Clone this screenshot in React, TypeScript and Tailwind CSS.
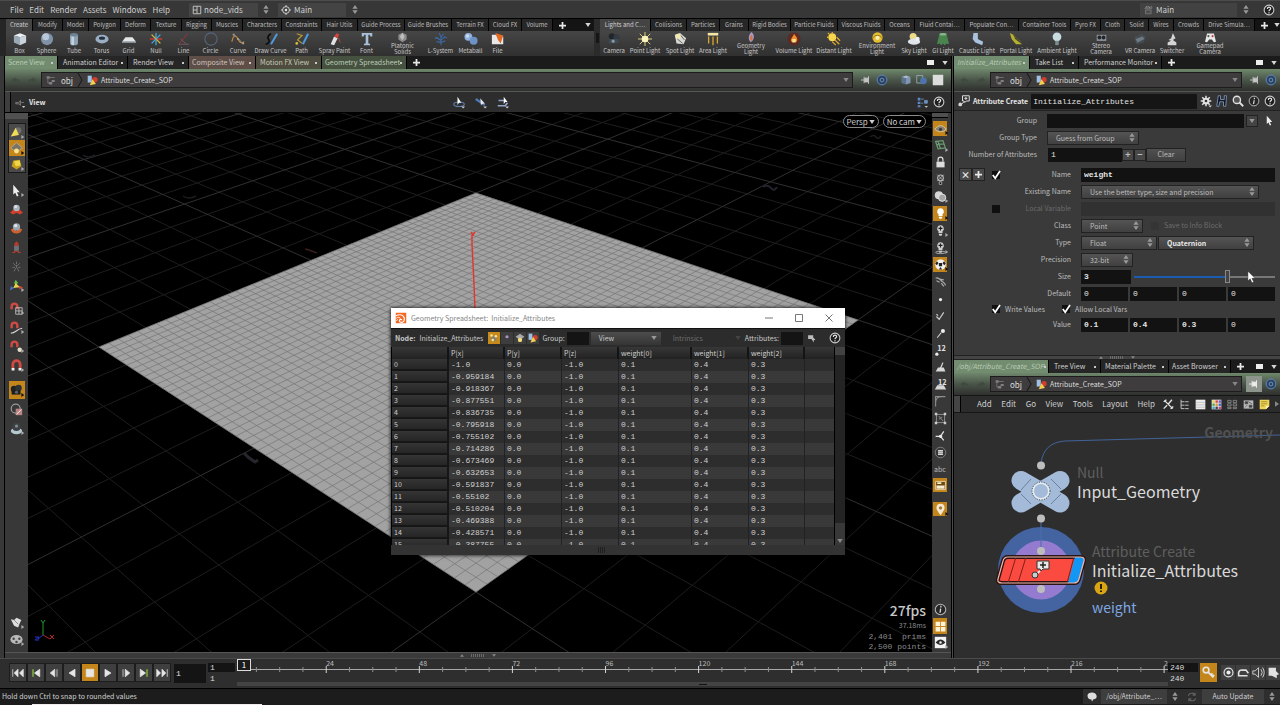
import React from 'react';
import { clsx } from 'clsx';

const MONO = "font-['Liberation_Mono',monospace]";

/* ---------- icons, all on a 16x16 box ---------- */

const magnet = <path d="M3.500 12V6.500a4.500 4.500 0 0 1 9 0V12" fill="none" stroke="#cf4a42" strokeWidth="3.500" />;
const smallMagnet = <path d="M2 9V5.500a3.500 3.500 0 0 1 7 0V9" fill="none" stroke="#cf4a42" strokeWidth="3" />;
const bulb = <path d="M8 1.500a4 4 0 0 0-2.500 7.200V11h5V8.700A4 4 0 0 0 8 1.500zM6 12h4v1.500L9 14.500H7l-1-1z" fill="currentColor" />;
const cube = (
  <>
    <path d="M1 4l7-2.500 7 2.500-7 2z" fill="#eef1f4" />
    <path d="M1 4l7 2v9l-7-3z" fill="#9ba9b6" />
    <path d="M15 4L8 6v9l7-3z" fill="#c9d3dc" />
  </>
);

const ICONS: Record<string, React.ReactNode> = {
  box: cube,
  sphere: <><circle cx="8" cy="8" r="7" fill="#7f92a8" /><circle cx="6.500" cy="5.500" r="4" fill="#b9c8d8" /></>,
  tube: <><path d="M3.500 3v10c0 3 9 3 9 0V3z" fill="#8fa3b5" /><path d="M5 4h3v11H5z" fill="#c3d2df" /><ellipse cx="8" cy="3" rx="4.500" ry="2" fill="#6e8496" /></>,
  torus: <><ellipse cx="8" cy="8" rx="7.500" ry="5" fill="#9aafc4" /><ellipse cx="8" cy="7" rx="3.500" ry="1.800" fill="#22303f" /></>,
  grid: <><path d="M4 6h8l4 5H0z" fill="#e4e7ea" /><path d="M0 11h16v1.500H0z" fill="#8b949c" /></>,
  null: <><path d="M8 1v14" stroke="#32a9c9" strokeWidth="1.600" /><path d="M1 8h14" stroke="#d03c2f" strokeWidth="1.600" /><path d="M3 3l10 10" stroke="#e0b23a" strokeWidth="1.600" /><path d="M13 3L3 13" stroke="#4e9fd8" strokeWidth="1.600" /></>,
  line: <><path d="M2 14L12 2" stroke="#a8323a" strokeWidth="1" /><path d="M2 14h12M4 8l7 6" stroke="#7d5a60" strokeWidth="1" /></>,
  circle: <circle cx="8" cy="8" r="7" fill="none" stroke="#56657d" strokeWidth="1.200" />,
  curve: <><path d="M1 11c2-9 5-7 7-3s4 6 7 3" fill="none" stroke="#c98d41" strokeWidth="1.300" /><path d="M3 3l3 2M9 8l5 6" stroke="#7f8ea3" /><path d="M2 2h2v2H2zM7 7h2v2H7zM13 12h2v2h-2z" fill="#b3a58c" /></>,
  drawcurve: <><path d="M2 14c4-1 5-4 3-6s1-5 3-6" fill="none" stroke="#0b0b0b" strokeWidth="1.800" /><path d="M15 2L8 14" stroke="#4f9be0" strokeWidth="2.200" /></>,
  path: <><path d="M2 2l6 2-5 5 5 4" fill="none" stroke="#b99a30" strokeWidth="1.400" /><path d="M15 2L9 14" stroke="#4f9be0" strokeWidth="2.200" /><circle cx="2" cy="13" r="1.500" fill="#d8c13f" /></>,
  spray: <><path d="M3 14l4-9 4 2-4 8z" fill="#dfe3e6" /><path d="M7 5l4 2 2-4-3-2z" fill="#d0443a" /><path d="M12 7l2 5" stroke="#d0443a" /></>,
  font: <path d="M2 1h12v4h-2L11 3H9.500v10l2 .5V15h-7v-1.500l2-.5V3H5L4 5H2z" fill="#a9bfd6" />,
  platonic: <><path d="M8 1l6 3v7l-6 4-6-4V4z" fill="#8c8c8c" /><path d="M8 1l3 6-3 5-4-5z" fill="#bdbdbd" /></>,
  lsystem: <path d="M8 15V5M8 10L3 6M8 9l5-4M8 6L6 1M8 6l3-4M4 7L1 7M12 6l3 1M8 12l-5-1M8 12l5-2" fill="none" stroke="#3c6aa8" strokeWidth="1.200" />,
  metaball: <><circle cx="5" cy="5.500" r="4.500" fill="#90b2dd" /><circle cx="11" cy="10" r="4.500" fill="#6d93c6" /><circle cx="4" cy="4.500" r="2" fill="#c8daf1" /></>,
  file: <><path d="M1 3h5l1 2h7v9H1z" fill="#e8e8e8" /><path d="M5 1l9 3-3 9-3-4z" fill="#e36a25" /></>,
  camera: <><circle cx="5.500" cy="5" r="3.500" fill="#20262a" /><circle cx="11" cy="6" r="3.500" fill="#323b43" /><path d="M2 8h11v5H2z" fill="#3f4951" /><circle cx="7" cy="10.500" r="1.800" fill="#8a99a3" /></>,
  pointlight: <><path d="M8 0v16M0 8h16M2 2l12 12M14 2L2 14" stroke="#e3d27c" strokeWidth="1.100" /><circle cx="8" cy="8" r="3.800" fill="#fbf3bd" /></>,
  spotlight: <><path d="M2 3l6-2 7 6-3 7-8-1z" fill="#d8d8d4" /><circle cx="6" cy="5" r="3" fill="#f2e9b2" /><path d="M5 8l6 5M9 4l4 5" stroke="#555" /></>,
  arealight: <><path d="M2 1h12v3H2z" fill="#f2e7a5" /><path d="M3 5v8M8 5v10M13 5v8" stroke="#d8a82c" strokeWidth="1.500" /></>,
  geolight: <><path d="M8 0c3 3 5 6 2 12l-3 3C2 10 4 4 8 0z" fill="#a79ac4" /><path d="M8 4c2 4 2 6 0 9-3-3-2-6 0-9z" fill="#e06c36" /></>,
  volumelight: <><circle cx="8" cy="8" r="7.500" fill="#5c2a22" /><path d="M8 2c3 4 5 6 3 9H5C3 8 7 6 8 2z" fill="#f08a2b" /><path d="M6 8h4v4H6z" fill="#fbe08b" /></>,
  distantlight: <><circle cx="6" cy="6" r="4.500" fill="#f5d64e" /><path d="M6 0v2M0 6h2M1 1l2 2M9 9l5 5M11 6l4 4M6 11l4 4" stroke="#e0ac2c" strokeWidth="1.500" /></>,
  envlight: <><circle cx="8" cy="8" r="7.500" fill="#e4bd31" /><path d="M1 10a7 5 0 0 1 14 0" fill="none" stroke="#876a10" strokeWidth="1.300" /><circle cx="8" cy="8.500" r="3" fill="#f7efb8" /></>,
  skylight: <><circle cx="7" cy="5" r="4" fill="#eddc8a" /><ellipse cx="8" cy="11" rx="7" ry="3.500" fill="#dfe4ea" /><circle cx="12" cy="8" r="2.500" fill="#eef1f4" /></>,
  gilight: <><path d="M4 2h8l3 12-3-1-2 2-2-2-2 2-2-2-3 1z" fill="#4a8550" /><ellipse cx="8" cy="2.500" rx="4" ry="1.500" fill="#86b98a" /></>,
  causticlight: <path d="M4 1h5v7l6 3-1 4-8-3-3-4z" fill="#a8c2df" />,
  portallight: <><path d="M1 1l4 2 2 5 8 6H8L3 8z" fill="#b5b02f" /><path d="M5 3l3 4 6 4" stroke="#6a6818" fill="none" /></>,
  ambientlight: <><circle cx="8" cy="5.500" r="5" fill="#c8dcdf" /><path d="M6 10h4v5H6z" fill="#7a8e92" /></>,
  stereo: <><path d="M1 4h14v9H1z" fill="#8b8f97" /><circle cx="5" cy="8" r="2.800" fill="#23262b" /><circle cx="11" cy="8" r="2.800" fill="#23262b" /></>,
  vrcamera: <><path d="M1 6l9-4 5 4-3 6-8 2z" fill="#454d53" /><path d="M3 8l8-3 2 3-8 4z" fill="#6f7b84" /></>,
  switcher: <path d="M9 1l3 6-3 2 4 3v3H3v-3l4-2-3-1 3-2z" fill="#d4d4d4" />,
  gamepad: <><path d="M3 2h10l3 12-3 1-3-4H6l-3 4-3-1z" fill="#e8e8e8" /><circle cx="5" cy="6" r="1.500" fill="#555" /><circle cx="11" cy="6" r="1.500" fill="#b44" /></>,

  // left tool column
  objects: <><circle cx="10" cy="5.500" r="4" fill="#6e6e6e" /><path d="M1 13L7 2l4 9z" fill="#f2dc56" /></>,
  points: <><path d="M8 1l7 6-7 6-7-6z" fill="#7b7466" stroke="#b9ae94" /><circle cx="8" cy="11" r="3" fill="#fbe28f" /></>,
  yellowcube: <><path d="M4 3l8-1 2 8-6 4-6-4z" fill="#c9a31c" /><path d="M5 4l7-1 1 6-6 1z" fill="#f0d74a" /></>,
  arrow: <path d="M4 1l8 9H8.500l2 4.500-2 .8-2-4.500L4 13z" fill="#ececec" />,
  move: <><path d="M0 12l4-4 4 2 4-2 4 4-4 2-4-2-4 2z" fill="#d2402c" /><circle cx="8" cy="6" r="4" fill="#aab3bd" /><circle cx="7" cy="4.500" r="1.800" fill="#dfe5ea" /></>,
  rotate: <><path d="M1 9c1 7 13 7 14 0l-3-1-4 3-4-3z" fill="#d2602c" /><circle cx="8" cy="6" r="4.500" fill="#9aa5b1" /><circle cx="7" cy="4.500" r="2" fill="#dfe5ea" /></>,
  scale: <><path d="M8 0l3 4-2 8 5 2-3 1-3-2-3 2-3-1 5-2-2-8z" fill="#b23a2e" /><path d="M5 6h6v6H5z" fill="#6b7178" /></>,
  pose: <path d="M8 2v3M8 6v4M4 4l3 3M12 4L9 7M5 14l2-4M11 14l-2-4M3 9h3M10 9h3" stroke="#707070" strokeWidth="1.200" />,
  handles: <><path d="M7 1l3 4-3 2-2-2z" fill="#62c04a" /><path d="M10 8l6 2-4 3z" fill="#d8432f" /><path d="M0 14l1-5 4 2z" fill="#4277d6" /><path d="M4 11l3-6 5 5z" fill="#e8d44c" /></>,
  snapgrid: <>{smallMagnet}<path d="M7 7h8v8H7zM11 7v8M7 11h8" fill="none" stroke="#c8c8c8" /></>,
  snapcurve: <>{smallMagnet}<path d="M1 15c6 0 7-5 14-6" fill="none" stroke="#d8d8d8" strokeWidth="1.300" /></>,
  snappoint: <>{smallMagnet}<circle cx="12" cy="12" r="2.800" fill="#e3ddc8" /></>,
  magnet: <>{magnet}<path d="M2 11h3.500v3H2zM10.500 11H14v3h-3.500z" fill="#eee" /></>,
  viewtool: <><circle cx="5" cy="6" r="4" fill="#202326" /><circle cx="10.500" cy="5" r="4" fill="#2e3235" /><path d="M2 8h11v5H2z" fill="#1b1d1f" /><circle cx="8" cy="10" r="2" fill="#5a6065" /></>,
  render: <><circle cx="7" cy="7" r="5.500" fill="none" stroke="#9a9a9a" strokeWidth="1.500" /><path d="M7 7h8v8H7z" fill="#b98484" /><path d="M8 14l6-6" stroke="#fff" /></>,
  flip: <><ellipse cx="8" cy="11" rx="7" ry="4" fill="#b5c9ce" /><circle cx="8" cy="6" r="5" fill="#3c4144" /><circle cx="8" cy="5" r="2" fill="#85898c" /></>,
  cloth: <><path d="M1 4l4 1 3-3 6 3-2 4-2 5-5-2z" fill="#dcdcdc" /><path d="M5 5l5 5" stroke="#777" /></>,
  reel: <><ellipse cx="8" cy="8" rx="7.500" ry="5.500" fill="#b9b9b9" /><circle cx="4.500" cy="7" r="1.500" fill="#444" /><circle cx="11.500" cy="7" r="1.500" fill="#444" /><circle cx="8" cy="11" r="1.500" fill="#444" /></>,

  // display option column
  eye: <><path d="M1 9c4-6 10-6 14 0-4 4-10 4-14 0z" fill="#8a8474" stroke="#ddd0a8" /><circle cx="8" cy="9" r="2" fill="#3b3b3b" /></>,
  refplane: <path d="M2 3l9-1 3 9-9 1zM5 3l3 9M3 7l9-1" fill="none" stroke="#6b9a6f" strokeWidth="1.500" />,
  lock: <><path d="M5 7V4.500a3 3 0 0 1 6 0V7" fill="none" stroke="#ddd" strokeWidth="1.500" /><path d="M3 7h10v7H3z" fill="#ddd" /></>,
  bulboff: <><circle cx="8" cy="6" r="3.500" fill="none" stroke="#bbb" strokeWidth="1.300" /><path d="M4 2l8 8M12 2L4 10M6.500 11h3v3h-3z" stroke="#bbb" /></>,
  spheres: <><circle cx="6" cy="6.500" r="5" fill="#d5d5d5" /><circle cx="10" cy="9.500" r="4.500" fill="#a5a5a5" stroke="#eee" /></>,
  bulb: <g color="#fff">{bulb}</g>,
  bulbplus: <g color="#cfcfcf">{bulb}<path d="M8 3v5M5.500 5.500h5" stroke="#222" strokeWidth="1.500" /></g>,
  bulbshadow: <g color="#cfcfcf">{bulb}<path d="M8 3v5M5.500 5.500h5" stroke="#222" strokeWidth="1.500" /><ellipse cx="8" cy="14" rx="6" ry="1.500" fill="none" stroke="#bbb" /></g>,
  ball: <><circle cx="8" cy="8" r="6.500" fill="#f2f2f2" /><path d="M6 6h4v4H6zM1.500 7l2-3 2 2-2 3zM14.500 7l-2-3-2 2 2 3zM6 14l2-3 2 3z" fill="#222" /></>,
  strands: <path d="M2 4c4-2 5 2 8 4s4 2 4 5M3 7l4 2M7 5l5 1M9 10l3 4" fill="none" stroke="#a9a9a9" strokeWidth="1.500" />,
  dot: <circle cx="8" cy="8" r="2" fill="#eee" />,
  normals: <path d="M3 8l4 4M6 12l6-9M3 5l2 2" stroke="#ccc" strokeWidth="1.500" />,
  trail: <><path d="M4 13l5-6" stroke="#ccc" strokeWidth="1.300" /><circle cx="11" cy="5" r="2.500" fill="#eee" /></>,
  pointnum: <><circle cx="3.500" cy="12.500" r="2" fill="#eee" /><text x="4" y="8" fontSize="9" fontWeight="700" fill="#e2e2e2">12</text></>,
  primnormal: <><path d="M2 13l3-5h7l2 5z" fill="#d6d6d6" /><path d="M8 9l3-7" stroke="#ddd" strokeWidth="1.500" /></>,
  primnum: <><path d="M1 14l3-5h8l3 5z" fill="#d6d6d6" /><text x="5" y="9" fontSize="9" fontWeight="700" fill="#e2e2e2">12</text></>,
  hull: <path d="M2 14V2h12M2 9c0-4 3-7 7-7" fill="none" stroke="#8f8f8f" strokeWidth="1.300" />,
  cage: <><path d="M3 3h10v10H3zM6 9l4-3M6 5l5 6" fill="none" stroke="#9c9c9c" /><path d="M1 1h3v3H1zM12 1h3v3h-3zM1 12h3v3H1zM12 12h3v3h-3z" fill="#ccc" /></>,
  tangents: <><path d="M2 9h6M8 9l4-6M8 9l4 5" stroke="#e3e3e3" strokeWidth="1.500" /><circle cx="8" cy="9" r="2" fill="#eee" /></>,
  film: <><circle cx="8" cy="8" r="6.500" fill="none" stroke="#8c8c8c" /><path d="M5 5h6v6H5z" fill="#e3e3e3" /><path d="M5 7h6M5 9h6" stroke="#777" /></>,
  images: <><path d="M2 3h12v10H2z" fill="#6b4a12" stroke="#f3dfb8" /><path d="M3 8h10v4H3zM4 4h5v2H4z" fill="#f7ecd0" /></>,
  pin: <><path d="M8 1a5 5 0 0 0-5 5c0 3 5 9 5 9s5-6 5-9a5 5 0 0 0-5-5z" fill="#f2e8d4" /><circle cx="8" cy="6" r="2" fill="#a37a30" /></>,
  quad: <path d="M2 2h5.500v5.500H2zM8.500 2H14v5.500H8.500zM2 8.500h5.500V14H2zM8.500 8.500H14V14H8.500z" fill="#fdf3d8" />,
  eyebox: <><path d="M1 1h14v14H1z" fill="#f2f2f2" /><path d="M2 8c4-5 8-5 12 0-4 4-8 4-12 0z" fill="#2a2a2a" /><circle cx="8" cy="8" r="1.500" fill="#eee" /></>,

  // small interface glyphs
  layout: <path d="M2 2h12v12H2zM8 2v12M2 8h6" fill="none" stroke="#c5c5c5" strokeWidth="1.500" />,
  radial: <><circle cx="8" cy="8" r="5.500" fill="none" stroke="#d2d2d2" strokeWidth="1.500" /><circle cx="8" cy="8" r="2" fill="#e2e2e2" /><path d="M8 0v3M8 13v3M0 8h3M13 8h3" stroke="#d2d2d2" strokeWidth="1.500" /></>,
  clapper: <><path d="M3 5l4-3 4 2 3-2v4H3zM4 8h9v6H4z" fill="#4d4d4d" stroke="#8a8a8a" /><path d="M5 2l2 3M9 2l2 3" stroke="#aaa" /></>,
  net: <><path d="M1 2h5v4H1zM9 8h5v3H9zM5 11h5v4H5z" fill="#808080" /><path d="M3 6v7h3M6 4h8" stroke="#8f8f8f" fill="none" /></>,
  shapes: <><path d="M1 1h6v10H1z" fill="#9fc0e4" /><circle cx="11.500" cy="7" r="4" fill="#cf3f2e" /><path d="M4 15l4-9 5 7z" fill="#f4d04f" /></>,
  back: <path d="M1 8l6-5v3c5 0 7 2 7 7-2-3-4-3-7-3v3z" fill="currentColor" />,
  forward: <path d="M15 8L9 3v3c-5 0-7 2-7 7 2-3 4-3 7-3v3z" fill="currentColor" />,
  pushpin: <path d="M0 8h5M5 3v10M6 5h5v6H6zM12 2v12" stroke="currentColor" fill="currentColor" strokeWidth="1.500" />,
  target: <><circle cx="8" cy="8" r="6.500" fill="#2c4260" stroke="#5d88bd" strokeWidth="1.300" /><circle cx="8" cy="8" r="2.500" fill="none" stroke="#7fa5d3" /></>,
  bluecube: <><path d="M2 4l6-2 6 2-6 2z" fill="#a9b9cd" /><path d="M2 4l6 2v8l-6-2z" fill="#5d7491" /><path d="M14 4L8 6v8l6-2z" fill="#8096b3" /></>,
  ghost: <><path d="M1 2h8v10H1z" fill="none" stroke="#8fa0b3" strokeWidth="1.300" /><circle cx="10" cy="9" r="4.500" fill="#4e74ad" /></>,
  square: <path d="M1 1h14v14H1z" fill="#dcdcdc" />,
  viewcam: <><path d="M1 8h4l3-3v7L5 10H1zM9 8h4" stroke="#777" fill="#4c4c4c" strokeWidth="1.300" /><path d="M10 13h5l-2.500 3z" fill="#ccc" /></>,
  select1: <><ellipse cx="8" cy="11" rx="7" ry="3" fill="none" stroke="#5f7fae" strokeWidth="1.500" /><path d="M6 1l5 8H8l-2 3z" fill="#fff" /><path d="M11 14h5l-2.500 2.500z" fill="#ccc" /></>,
  select2: <><path d="M1 4l12 8" stroke="#4f79b5" strokeWidth="3" /><path d="M7 3l6 7-4 .5L8 13z" fill="#e8e8e8" /><path d="M11 14h5l-2.500 2.500z" fill="#ccc" /></>,
  select3: <><path d="M1 13h10l3-4M2 6h8" stroke="#8fa8ca" strokeWidth="2.200" fill="none" /><path d="M9 1l5 7h-3l-2 3z" fill="#fff" /><path d="M11 14h5l-2.500 2.500z" fill="#ccc" /></>,
  options: <><path d="M1 1h4v4H1zM1 7h4v3H1zM1 12h4v3H1z" fill="#5c87c6" /><path d="M6 3h4M6 9h3M11 5h4v4h-4z" stroke="#83a4d2" fill="#5c87c6" /><path d="M11 13h5l-2.500 2.500z" fill="#ccc" /></>,
  help: <><circle cx="8" cy="8" r="6.500" fill="#1f1f1f" stroke="#cfcfcf" strokeWidth="1.400" /><path d="M5.800 6.500c0-3 4.400-3 4.400-.3 0 1.600-2.200 1.500-2.200 3.300M8 11v1.600" fill="none" stroke="#e5e5e5" strokeWidth="1.600" /></>,
  info: <><circle cx="8" cy="8" r="6.500" fill="#262626" stroke="#b5b5b5" strokeWidth="1.300" /><path d="M8.500 3.500v2M8.200 7l-.8 5" stroke="#ddd" strokeWidth="1.600" /></>,
  node: <><path d="M6 1h9v7h-4l-2 2-1-2H6z" fill="none" stroke="#e0e0e0" strokeWidth="1.300" /><path d="M10.500 2.500v4M8.500 4.500h4M8 9l-4 4" stroke="#e0e0e0" strokeWidth="1.300" /><circle cx="3" cy="12.500" r="2.500" fill="#d6d6d6" /></>,
  gear: <><path d="M8 1v14M1 8h14M3 3l10 10M13 3L3 13" stroke="#e2e2e2" strokeWidth="2" /><circle cx="8" cy="8" r="4.500" fill="#e2e2e2" /><circle cx="8" cy="8" r="1.800" fill="#333" /><path d="M11 14h5l-2.500 2.500z" fill="#ccc" /></>,
  hlogo: <path d="M3 1h3v5h5V1h3l-1 14h-3V9H5l-1 6H1z" fill="#0e1626" stroke="#8fa8cc" />,
  search: <><circle cx="6.500" cy="6.500" r="4.800" fill="#555" stroke="#e2e2e2" strokeWidth="1.800" /><path d="M10 10l5 5" stroke="#e2e2e2" strokeWidth="2.400" /></>,
  tools: <path d="M2 2l12 12M13 1L8 7M6 9l-5 5M1 4l4-3M11 14l4-3" stroke="#e2e2e2" strokeWidth="2" />,
  tree: <path d="M3 1v13M3 4h5M3 9h5M3 14h5M9 4h5M9 9h5M9 14h5" stroke="#c5c5c5" strokeWidth="1.400" fill="none" />,
  list: <><path d="M1 1h14v14H1z" fill="#ececec" /><path d="M1 5h14M1 8.500h14M1 12h14" stroke="#b3b3b3" /></>,
  palette: <><path d="M1 1h14v14H1z" fill="#eee" /><path d="M2 2h3.500v3.500H2z" fill="#ddd04b" /><path d="M6.500 2H10v3.500H6.500z" fill="#d14a3f" /><path d="M11 2h3.500v3.500H11z" fill="#7a5bc0" /><path d="M2 6.500h3.500V10H2z" fill="#51a650" /><path d="M6.500 6.500H10V10H6.500z" fill="#e5902f" /><path d="M11 6.500h3.500V10H11z" fill="#3b6cc4" /><path d="M2 11h3.500v3.500H2z" fill="#3da6c2" /><path d="M6.500 11H10v3.500H6.500z" fill="#444" /><path d="M11 11h3.500v3.500H11z" fill="#c3448c" /></>,
  table: <path d="M1 2h5v3H1zM1 7h5v3H1zM1 12h5v2H1zM9 2h5v3H9zM9 7h5v3H9zM9 12h5v2H9z" fill="none" stroke="#9d9d9d" />,
  map: <><path d="M1 2h14v12H1z" fill="#b9b9b9" /><path d="M3 4h4v3H3zM9 9h4v3H9zM8 4l5 3M3 12l3-3" fill="#444" stroke="#444" /></>,
  note: <><path d="M1 1h14v9l-5 5H1z" fill="#efd55a" /><path d="M3 4h9M3 7h9M3 10h5" stroke="#8a7420" /><path d="M10 15v-5h5z" fill="#fff3b0" /></>,
  key: <><circle cx="5" cy="5" r="3.500" fill="none" stroke="#e6e6e6" strokeWidth="2" /><path d="M7.500 7.500L14 14M11 11l2-2M13 13l2-2" stroke="#e6e6e6" strokeWidth="2.200" /></>,
  realtime: <><circle cx="8" cy="8" r="5.500" fill="#444" stroke="#e2e2e2" strokeWidth="1.500" /><circle cx="8" cy="8" r="2.500" fill="#eee" /></>,
  loop: <path d="M2 11V8a4 4 0 0 1 4-3h5l3 4M1 12h12" fill="none" stroke="#e0e0e0" strokeWidth="2" />,
  audio: <path d="M1 6h3l4-4v12l-4-4H1zM11 4q3 4 0 8M13 2q4 6 0 12" fill="none" stroke="#ccc" strokeWidth="1.200" />,
  playopt: <path d="M2 2h9v4l4 4-3 1v4L6 12H2z" fill="#e2e2e2" />,
  brain: <path d="M2 6c0-5 11-6 12 0 1 4-2 5-4 5l-2 3-1-3C4 12 2 9 2 6z" fill="#dedede" />,
  refresh: <path d="M2 6a6 6 0 0 1 11-1M14 10a6 6 0 0 1-11 1M13 1v4H9M3 15v-4h4" fill="none" stroke="#616161" strokeWidth="1.700" />,
  houdini: <><path d="M1 1h14v14H1z" fill="#f26722" /><path d="M1 5c9-4 13 2 11 7-2 3-7 2-6-1 1-2 3-1 3 0" fill="none" stroke="#fff" strokeWidth="1.500" /><path d="M1 9c3-3 6-2 6 0M2 12c0-1 1-2 2-2" fill="none" stroke="#fff" strokeWidth="1.200" /></>,
  particles: <><path d="M3 5h9v8H3z" fill="#8b8367" /><circle cx="4" cy="4" r="2" fill="#f7e7a0" /><circle cx="11" cy="5" r="2" fill="#f7e7a0" /><circle cx="6" cy="11" r="2" fill="#f7e7a0" /></>,
  vertex: <circle cx="8" cy="6" r="2.500" fill="#b294c2" />,
  prim: <><path d="M8 1l7 5-7 5-7-5z" fill="#aaa" /><circle cx="8" cy="11" r="3.500" fill="#f0dc7c" /></>,
  export: <path d="M2 2h9v4l4 4-3 1v4L8 9H2z" fill="#bdbdbd" />,
};

// icons with a fly-out marker in their lower right corner
const FLYOUT = [
  'objects', 'points', 'yellowcube', 'arrow', 'handles', 'snapgrid', 'snapcurve', 'snappoint', 'magnet', 'viewtool', 'flip',
  'cloth', 'reel', 'eye', 'refplane', 'spheres', 'bulb', 'bulbplus', 'bulbshadow', 'ball', 'pin', 'eyebox',
];

function Icon({ name, size = 'size-3', className }: { name: string; size?: string; className?: string }) {
  return (
    <svg viewBox="0 0 16 16" className={clsx('shrink-0 overflow-visible', size, className)} aria-hidden="true">
      {ICONS[name]}
    </svg>
  );
}

function UpDown() {
  return (
    <svg viewBox="0 0 8 12" className="h-[9px] w-[6px] shrink-0" aria-hidden="true">
      <path d="M4 0l3.500 5h-7zM4 12l3.500-5h-7z" fill="#999" />
    </svg>
  );
}

function Down({ color = 'text-[#d5d5d5]', className }: { color?: string; className?: string }) {
  return (
    <svg viewBox="0 0 8 6" className={clsx('h-1 w-[6px] shrink-0', color, className)} aria-hidden="true">
      <path d="M0 0h8L4 6z" fill="currentColor" />
    </svg>
  );
}

function Plus() {
  return (
    <svg viewBox="0 0 8 8" className="size-[7px] shrink-0" aria-hidden="true">
      <path d="M4 0v8M0 4h8" stroke="#e8e8e8" strokeWidth="2" />
    </svg>
  );
}

function Grip() {
  return (
    <div className="flex items-center gap-[7px]">
      <svg viewBox="0 0 6 4" className="h-[3px] w-1" aria-hidden="true"><path d="M0 4h6L3 0z" fill="#888" /></svg>
      <div className="h-[3px] w-[14px] bg-[repeating-linear-gradient(90deg,#6a6a6a_0_1px,transparent_1px_2px)]" />
      <svg viewBox="0 0 6 4" className="h-[3px] w-1" aria-hidden="true"><path d="M0 0h6L3 4z" fill="#888" /></svg>
    </div>
  );
}

/* ---------- shelves ---------- */

const leftTabs = [
  ['Create', 'w-[27px]'], ['Modify', 'w-[30px]'], ['Model', 'w-[26px]'], ['Polygon', 'w-[32px]'], ['Deform', 'w-[30px]'],
  ['Texture', 'w-[31px]'], ['Rigging', 'w-[30px]'], ['Muscles', 'w-[31px]'], ['Characters', 'w-[39px]'], ['Constraints', 'w-[40px]'],
  ['Hair Utils', 'w-[36px]'], ['Guide Process', 'w-[47px]'], ['Guide Brushes', 'w-[47px]'], ['Terrain FX', 'w-[37px]'],
  ['Cloud FX', 'w-[33px]'], ['Volume', 'w-[31px]'],
];

const leftTools = [
  ['Box', 'box', 'w-[27px]'], ['Sphere', 'sphere', 'w-[27px]'], ['Tube', 'tube', 'w-[28px]'], ['Torus', 'torus', 'w-[27px]'],
  ['Grid', 'grid', 'w-[27px]'], ['Null', 'null', 'w-[28px]'], ['Line', 'line', 'w-[27px]'], ['Circle', 'circle', 'w-[27px]'],
  ['Curve', 'curve', 'w-[28px]'], ['Draw Curve', 'drawcurve', 'w-[37px]'], ['Path', 'path', 'w-[25px]'],
  ['Spray Paint', 'spray', 'w-[41px]'], ['Font', 'font', 'w-[23px]'], ['Platonic\nSolids', 'platonic', 'w-[49px]'],
  ['L-System', 'lsystem', 'w-[27px]'], ['Metaball', 'metaball', 'w-[33px]'], ['File', 'file', 'w-[21px]'],
];

const rightTabs = [
  ['Lights and C…', 'w-[51px]'], ['Collisions', 'w-[36px]'], ['Particles', 'w-[33px]'], ['Grains', 'w-[29px]'],
  ['Rigid Bodies', 'w-[42px]'], ['Particle Fluids', 'w-[47px]'], ['Viscous Fluids', 'w-[47px]'], ['Oceans', 'w-[30px]'],
  ['Fluid Contai…', 'w-[50px]'], ['Populate Con…', 'w-[54px]'], ['Container Tools', 'w-[52px]'], ['Pyro FX', 'w-[30px]'],
  ['Cloth', 'w-[24px]'], ['Solid', 'w-[24px]'], ['Wires', 'w-[25px]'], ['Crowds', 'w-[30px]'], ['Drive Simula…', 'w-[51px]'],
];

const rightTools = [
  ['Camera', 'camera', 'w-[28px]'], ['Point Light', 'pointlight', 'w-[34px]'], ['Spot Light', 'spotlight', 'w-[36px]'],
  ['Area Light', 'arealight', 'w-[30px]'], ['Geometry\nLight', 'geolight', 'w-[46px]'], ['Volume Light', 'volumelight', 'w-[40px]'],
  ['Distant Light', 'distantlight', 'w-[40px]'], ['Environment\nLight', 'envlight', 'w-[46px]'], ['Sky Light', 'skylight', 'w-[28px]'],
  ['GI Light', 'gilight', 'w-[30px]'], ['Caustic Light', 'causticlight', 'w-[38px]'], ['Portal Light', 'portallight', 'w-[40px]'],
  ['Ambient Light', 'ambientlight', 'w-[42px]'], ['Stereo\nCamera', 'stereo', 'w-[46px]'], ['VR Camera', 'vrcamera', 'w-[32px]'],
  ['Switcher', 'switcher', 'w-[32px]'], ['Gamepad\nCamera', 'gamepad', 'w-[44px]'],
];

function Shelf({ tabs, tools, className }: { tabs: string[][]; tools: string[][]; className: string }) {
  return (
    <div className={clsx('min-w-0 overflow-hidden', className)}>
      <div className="flex h-3 items-stretch bg-[#141414]">
        {tabs.map(([label, width], i) => (
          <button
            key={label}
            className={clsx(
              'shrink-0 border-r border-black text-center text-[6px] leading-3 whitespace-nowrap',
              width,
              i === 0 ? 'bg-[#444] text-[#d0d0d0]' : 'bg-[#272727] text-[#bdbdbd]',
            )}
          >
            {label}
          </button>
        ))}
        <button aria-label="Add shelf" className="flex w-[18px] shrink-0 items-center justify-center"><Plus /></button>
        <button aria-label="Shelf menu" className="ml-auto flex w-3 items-center justify-center"><Down /></button>
      </div>
      <div className="flex h-[25px] bg-linear-to-b from-[#464646] to-[#303030]">
        {tools.map(([label, icon, width]) => (
          <button key={label} className={clsx('flex shrink-0 flex-col items-center', width)}>
            <Icon name={icon} size={label.includes('\n') ? 'size-[11px]' : 'size-[14px]'} className="mt-px" />
            <span
              className={clsx(
                'text-center text-[6px] whitespace-pre text-[#c6c6c6]',
                label.includes('\n') ? 'leading-[6px]' : 'leading-[9px]',
              )}
            >
              {label}
            </span>
          </button>
        ))}
      </div>
    </div>
  );
}

/* ---------- panes ---------- */

type Tab = { label: string; className: string };

function PaneTabs({ tabs }: { tabs: Tab[] }) {
  return (
    <div className="flex h-[13px] shrink-0 items-stretch bg-[#1b1b1b] text-[7px] leading-[13px]">
      {tabs.map((tab) => (
        <button
          key={tab.label}
          className={clsx('flex shrink-0 items-center justify-between border-r border-black pr-1 whitespace-nowrap', tab.className)}
        >
          {tab.label}
          <span className="size-[2px] shrink-0 bg-[#c8c8c8]" />
        </button>
      ))}
      <button aria-label="New tab" className="flex w-[18px] items-center justify-center"><Plus /></button>
      <div className="ml-auto flex items-center gap-2 pr-[3px]">
        <span className="h-[5px] w-[7px] bg-[#ececec]" />
        <Down />
      </div>
    </div>
  );
}

function PathBar({ children }: { children: React.ReactNode }) {
  return (
    <div className="flex h-[22px] shrink-0 items-center bg-linear-to-b from-[#6f886c] via-[#4a5549] to-[#2e302e] pr-[3px] pl-1">
      <Icon name="back" size="size-[10px]" className="mr-[6px] ml-[2px] text-[#3f4b3e]" />
      <Icon name="forward" size="size-[10px]" className="mr-1 text-[#3f4b3e]" />
      <div className="flex h-[16px] min-w-0 flex-1 items-center border border-[#1c1c1c] bg-[#3e3c3c] pl-1 text-[7px] leading-[13px] text-[#dcdcdc]">
        <Icon name="net" size="size-[10px]" />
        <a href="#obj" className="ml-[5px] text-[8px]">obj</a>
        <svg viewBox="0 0 6 14" className="mx-1 h-[14px] w-[6px]" aria-hidden="true">
          <path d="M1 0l4 7-4 7" fill="none" stroke="#151515" />
        </svg>
        <Icon name="shapes" size="size-[11px]" />
        <a href="#sop" className="ml-[3px]">Attribute_Create_SOP</a>
        <Down color="text-[#888]" className="mr-[3px] ml-auto" />
      </div>
      {children}
    </div>
  );
}

/* ---------- 3D viewport ---------- */

// Perspective map of the unit square onto the four corners of the grid object:
// back, right, front, left.
const corners = [[476, 193], [858, 320], [476, 592], [99, 347]];

function makeProjection([[x0, y0], [x1, y1], [x2, y2], [x3, y3]]: number[][]) {
  const dx1 = x1 - x2, dx2 = x3 - x2, sx = x0 - x1 + x2 - x3;
  const dy1 = y1 - y2, dy2 = y3 - y2, sy = y0 - y1 + y2 - y3;
  const det = dx1 * dy2 - dy1 * dx2;
  const g = (sx * dy2 - sy * dx2) / det;
  const h = (dx1 * sy - dy1 * sx) / det;
  return {
    g,
    h,
    at: (u: number, v: number) => {
      const w = g * u + h * v + 1;
      const x = (x0 + (x1 - x0 + g * x1) * u + (x3 - x0 + h * x3) * v) / w;
      const y = (y0 + (y1 - y0 + g * y1) * u + (y3 - y0 + h * y3) * v) / w;
      return `${x.toFixed(1)} ${y.toFixed(1)}`;
    },
  };
}

const projection = makeProjection(corners);

function gridPath(from: number, to: number, steps: number, keep: (i: number) => boolean) {
  let d = '';
  for (let i = 0; i <= steps; i++) {
    if (!keep(i)) continue;
    const c = from + ((to - from) * i) / steps;
    // stop short of the camera plane
    const vEnd = Math.min(to, (-0.85 - projection.g * c) / projection.h);
    const uEnd = Math.min(to, (-0.85 - projection.h * c) / projection.g);
    d += `M${projection.at(c, from)}L${projection.at(c, vEnd)}M${projection.at(from, c)}L${projection.at(uEnd, c)}`;
  }
  return d;
}

const minorGrid = gridPath(-2, 3, 50, (i) => i % 5 !== 0);
const majorGrid = gridPath(-2, 3, 50, (i) => i % 5 === 0);
const meshGrid = gridPath(0, 1, 49, () => true);

const columns = ['P[x]', 'P[y]', 'P[z]', 'weight[0]', 'weight[1]', 'weight[2]'];
const px = [
  '-1.0', '-0.959184', '-0.918367', '-0.877551', '-0.836735', '-0.795918', '-0.755102', '-0.714286',
  '-0.673469', '-0.632653', '-0.591837', '-0.55102', '-0.510204', '-0.469388', '-0.428571', '-0.387755',
];

function SpreadsheetWindow() {
  return (
    <section aria-label="Geometry Spreadsheet" className="absolute top-[195px] left-[363px] flex h-[247px] w-[454px] flex-col bg-[#2c2c2c] shadow-[0_0_4px_#000]">
      <div className="flex h-5 shrink-0 items-center bg-white px-1 text-[7px] text-[#858585]">
        <Icon name="houdini" className="mr-1" />
        <span className="whitespace-pre">Geometry Spreadsheet:  Initialize_Attributes</span>
        <div className="ml-auto flex items-center gap-[22px] pr-2">
          {['M0 4h8', 'M.5.5h7v7h-7z', 'M.5.5l7 7M7.500.5l-7 7'].map((d, i) => (
            <button key={d} aria-label={['Minimize', 'Maximize', 'Close'][i]}>
              <svg viewBox="0 0 8 8" className="size-2"><path d={d} fill="none" stroke="#777" /></svg>
            </button>
          ))}
        </div>
      </div>
      <div className="flex h-[19px] shrink-0 items-center border-t border-[#111] pl-1 text-[7px] whitespace-nowrap text-[#c9c9c9]">
        <b>Node:</b>
        <span className="w-[73px] pl-1">Initialize_Attributes</span>
        {['particles', 'vertex', 'prim', 'shapes'].map((name, i) => (
          <button key={name} aria-label={name} className={clsx('mr-px flex size-3 items-center justify-center', i === 0 ? 'bg-[#c98a1c]' : 'bg-[#3d3d3d]')}>
            <Icon name={name} size="size-[10px]" />
          </button>
        ))}
        <label htmlFor="ss-group" className="ml-0.5">Group:</label>
        <input id="ss-group" className="ml-0.5 h-[13px] w-[22px] bg-[#141414]" />
        <button className="ml-0.5 flex h-[13px] w-[70px] items-center bg-linear-to-b from-[#4d4d4d] to-[#353535] pl-2">
          View
          <Down color="text-[#999]" className="mr-1 ml-auto" />
        </button>
        <button className="ml-1 flex h-[13px] w-[80px] items-center pl-2 text-[#6f6f6f]">
          Intrinsics
          <Down color="text-[#444]" className="mr-1 ml-auto" />
        </button>
        <label htmlFor="ss-attribs">Attributes:</label>
        <input id="ss-attribs" className="ml-0.5 h-[13px] w-[22px] bg-[#141414]" />
        <Icon name="export" size="size-[9px]" className="mx-1" />
        <Icon name="help" className="mr-1 ml-auto" />
      </div>
      <div className="flex min-h-0 flex-1">
        <div className="min-w-0 flex-1 overflow-hidden border-l border-black bg-[#1f1f1f]">
          <table className="w-full table-fixed border-separate border-spacing-0 text-left text-[8px] text-[#cfcfcf]">
            <colgroup>
              <col className="w-[57px]" />
              <col className="w-[56px]" />
              <col className="w-[57px]" />
              <col className="w-[57px]" />
              <col className="w-[73px]" />
              <col className="w-[57px]" />
              <col className="w-[56px]" />
              <col />
            </colgroup>
            <thead>
              <tr className="h-3 bg-linear-to-b from-[#373737] to-[#222] text-[7px] leading-[12px]">
                <th className="border-r-2 border-[#141414] p-0" />
                {columns.map((c) => (
                  <th key={c} className="border-r-2 border-[#141414] p-0 pl-0.5 font-normal">{c}</th>
                ))}
                <th className="p-0" />
              </tr>
            </thead>
            <tbody>
              {px.map((x, i) => (
                <tr key={x} className={clsx('h-3 leading-[12px]', i % 2 ? 'bg-[#393939]' : 'bg-[#2d2d2d]')}>
                  <th className="border-r-2 border-b-2 border-[#161616] bg-linear-to-b from-[#353535] to-[#262626] p-0 pl-0.5 text-[7px] leading-[10px] font-normal">{i}</th>
                  {[x, '0.0', '-1.0', '0.1', '0.4', '0.3'].map((v, j) => (
                    <td key={j} className={clsx('border-r border-[#222] p-0 pl-0.5', MONO)}>{v}</td>
                  ))}
                  <td className="p-0" />
                </tr>
              ))}
            </tbody>
          </table>
        </div>
        <div className="flex w-[11px] flex-col items-center justify-between border-l border-black bg-[#242424]">
          <span className="h-2 w-full bg-[#424242]" />
          <div className="flex h-[22px] w-full flex-col items-center justify-end bg-[#383838] pb-0.5">
            <Down color="text-[#888]" />
          </div>
        </div>
      </div>
      <div className="flex h-[10px] shrink-0 items-center justify-center bg-[#333]">
        <svg viewBox="0 0 8 6" className="mr-8 h-1.5 w-2" aria-hidden="true">
          <path d="M0 1h8M0 3h8M0 5h8" stroke="#0c0c0c" strokeDasharray="1 1" />
        </svg>
      </div>
    </section>
  );
}

function Viewport() {
  return (
    <div className="relative min-w-0 flex-1 overflow-hidden bg-black">
      <svg viewBox="28 113 904 540" preserveAspectRatio="xMinYMin slice" className="absolute inset-0 size-full" aria-hidden="true">
        <path d={minorGrid} stroke="#1d1d1d" fill="none" />
        <path d={majorGrid} stroke="#303030" fill="none" />
        <path d={`M${corners.map((c) => c.join(' ')).join('L')}z`} fill="#a2a2a2" />
        <path d={meshGrid} stroke="#757575" strokeWidth="0.700" fill="none" />
        <path d="M471 232l2 3 2-3M472 235v9l1 20 1 20 1 26" stroke="#e5352b" strokeWidth="1.400" fill="none" />
        <path d="M244 453l4 4 7 5 3-2" stroke="#26262f" strokeWidth="3" fill="none" />
        <path d="M763 187q5-3 8 1t6-1" stroke="#23232e" strokeWidth="2" fill="none" />
        <path d="M870 137q4-3 6 0t5-1M183 196q6 4 13 0M83 155q5 4 12 0" stroke="#1d1d22" strokeWidth="1.500" fill="none" />
        <path d="M305 249l4 1 8 3" stroke="#3a1d1d" strokeWidth="1.500" fill="none" />
      </svg>
      <div className="absolute top-px right-[6px] flex gap-1 pt-px text-[8px] leading-[11px] text-[#cfcfcf]">
        {['Persp', 'No cam'].map((label) => (
          <button key={label} className="flex items-center gap-px rounded-full border border-[#8b8b8b] bg-black px-[3px]">
            {label}
            <Down color="text-[#cfcfcf]" />
          </button>
        ))}
      </div>
      <div className="absolute right-[6px] bottom-0 text-right text-[#8c8c8c]">
        <p className="text-[14px] leading-[18px] font-medium text-[#c6c6c6]">27fps</p>
        <p className="text-[7px] leading-[13px]">37.18ms</p>
        <p className={clsx('text-[8px] leading-[10px] whitespace-pre', MONO)}>{'2,401  prims\n2,500 points'}</p>
      </div>
      <svg viewBox="0 0 24 24" className="absolute bottom-2 left-1 size-6" aria-hidden="true">
        <path d="M11 15V5M9 0l2 3 2-3M11 3v2" stroke="#1e9a2c" fill="none" />
        <path d="M11 15l7 4M18 15l4 4M22 15l-4 4" stroke="#b5232a" fill="none" />
        <path d="M11 15l-5 4M3 17h4l-4 3h4" stroke="#2433c9" fill="none" />
      </svg>
      <SpreadsheetWindow />
    </div>
  );
}

function ToolButton({ name, active, className }: { name: string; active?: boolean; className?: string }) {
  return (
    <button aria-label={name} className={clsx('flex shrink-0 items-center justify-center', active && 'bg-[#c4861b]', className)}>
      <svg viewBox="0 0 16 16" className="size-[13px] shrink-0 overflow-visible" aria-hidden="true">
        {ICONS[name]}
        {FLYOUT.includes(name) && <path d="M14 11l3.500 2.500L14 16z" fill={active ? '#111' : '#aaa'} />}
      </svg>
    </button>
  );
}

const displayTools = [
  'eye', 'refplane', 'lock', 'bulboff', 'spheres', 'bulb', 'bulbplus', 'bulbshadow', 'ball', 'strands',
];
const markerTools = ['dot', 'normals', 'trail', 'pointnum', 'primnormal', 'primnum', 'hull', 'cage', 'tangents', 'film'];

function ScenePane() {
  return (
    <div className="flex min-w-0 flex-1 flex-col">
      <PaneTabs
        tabs={[
          { label: 'Scene View', className: 'w-[53px] bg-[#728c6f] pl-[3px] text-[#b9cbb5]' },
          { label: 'Animation Editor', className: 'w-[70px] bg-[#262626] pl-[5px] text-[#cfcfcf]' },
          { label: 'Render View', className: 'w-[61px] bg-[#262626] pl-[5px] text-[#cfcfcf]' },
          { label: 'Composite View', className: 'w-[67px] bg-[#5e4e47] pl-[3px] text-[#cfc5c0]' },
          { label: 'Motion FX View', className: 'w-[66px] bg-[#4d4c3e] pl-1 text-[#c9c9bb]' },
          { label: 'Geometry Spreadsheet', className: 'w-[85px] bg-[#46523f] pl-[3px] text-[#bccab9]' },
        ]}
      />
      <PathBar>
        <Icon name="pushpin" size="size-[10px]" className="ml-2 text-[#c5c5c5]" />
        <Icon name="target" className="mr-3 ml-[5px]" />
        <Icon name="bluecube" className="mr-1" />
        <Icon name="ghost" className="mr-1" />
        <Icon name="square" className="mr-1" />
      </PathBar>
      <div className="flex h-[22px] shrink-0 items-center border-y border-t-[#555] border-b-black bg-[#2d2d2d] pr-[6px]">
        <span className="mr-1 h-full w-[6px] border-r border-black bg-[#3e3e3e]" />
        <Icon name="viewcam" size="size-[11px]" className="mr-[3px]" />
        <b className="text-[7px] text-[#e3e3e3]">View</b>
        <div className="flex flex-1 items-center justify-center gap-[10px]">
          <Icon name="select1" />
          <Icon name="select2" />
          <Icon name="select3" />
        </div>
        <Icon name="options" size="size-[11px]" className="mr-[5px]" />
        <Icon name="help" />
      </div>
      <div className="flex min-h-0 flex-1">
        <div className="flex w-[23px] shrink-0 flex-col items-center bg-[#383838]">
          <span className="h-[6px] w-full bg-[#505050]" />
          <div className="mt-1 flex flex-col border border-[#1a1a1a] bg-[#4a4a4a]">
            <ToolButton name="objects" className="h-4 w-4" />
            <ToolButton name="points" active className="h-4 w-4" />
            <ToolButton name="yellowcube" className="h-4 w-4" />
          </div>
          <div className="mt-2 flex flex-col">
            {['arrow', 'move', 'rotate', 'scale', 'pose', 'handles'].map((n) => <ToolButton key={n} name={n} className="h-[19px] w-4" />)}
          </div>
          <div className="mt-1 flex flex-col">
            {['snapgrid', 'snapcurve', 'snappoint', 'magnet'].map((n) => <ToolButton key={n} name={n} className="h-[19px] w-4" />)}
          </div>
          <div className="mt-[6px] flex flex-col gap-px">
            {['viewtool', 'render', 'flip'].map((n, i) => <ToolButton key={n} name={n} active={i === 0} className="h-[18px] w-4" />)}
          </div>
          <div className="mt-auto mb-1 flex flex-col">
            {['cloth', 'reel'].map((n) => <ToolButton key={n} name={n} className="h-[17px] w-4" />)}
          </div>
        </div>
        <Viewport />
        <div className="flex w-[19px] shrink-0 flex-col items-center bg-[#383838] pr-[3px]">
          <span className="mb-[3px] h-[5px] w-full border-b border-black bg-[#505050]" />
          {displayTools.map((n) => (
            <ToolButton key={n} name={n} active={['eye', 'bulb', 'ball'].includes(n)} className="mb-[2px] h-[15px] w-[14px]" />
          ))}
          <div className="flex flex-col">
            {markerTools.map((n) => <ToolButton key={n} name={n} className="h-[17px] w-[14px]" />)}
          </div>
          <button className="h-4 text-[7px] leading-4 text-[#bbb]">abc</button>
          <ToolButton name="images" active className="mt-px h-[14px] w-[14px]" />
          <ToolButton name="pin" active className="mt-[10px] h-[14px] w-[14px]" />
          <ToolButton name="info" className="mt-auto h-[17px] w-[14px]" />
          <ToolButton name="quad" active className="h-[16px] w-[14px]" />
          <ToolButton name="eyebox" className="mb-px h-[17px] w-[14px]" />
        </div>
      </div>
      <div className="flex h-[6px] shrink-0 items-center justify-center border-t border-[#555] bg-[#3a3a3a]"><Grip /></div>
    </div>
  );
}

/* ---------- parameters ---------- */

const field = 'h-[14px] min-w-0 bg-[#121212] px-[3px] text-[8px] text-[#e4e4e4] outline-none';

function Select({ id, value, className }: { id: string; value: string; className: string }) {
  return (
    <div className={clsx('flex h-[14px] items-center border border-[#222] bg-linear-to-b from-[#545454] to-[#404040] pr-[3px]', className)}>
      <select id={id} defaultValue={value} className="h-full min-w-0 flex-1 appearance-none pl-[8px] text-[7px] leading-3 outline-none">
        <option>{value}</option>
      </select>
      <UpDown />
    </div>
  );
}

function Check({ id, label, checked }: { id: string; label?: string; checked?: boolean }) {
  return (
    <span className="relative flex size-2 shrink-0">
      <input id={id} type="checkbox" aria-label={label} defaultChecked={checked} className="peer size-2 appearance-none bg-[#101010]" />
      <svg viewBox="0 0 10 10" className="pointer-events-none absolute inset-0 hidden size-full overflow-visible peer-checked:block" aria-hidden="true">
        <path d="M1 5l3 4 6-9" fill="none" stroke="#fff" strokeWidth="2.200" />
      </svg>
    </span>
  );
}

function Row({ label, id, wide, dim, lead, children }: { label: string; id: string; wide?: boolean; dim?: boolean; lead?: React.ReactNode; children: React.ReactNode }) {
  return (
    <div className="flex h-[17px] items-center">
      <div className={clsx('flex shrink-0 items-center pr-[10px]', wide ? 'w-[127px]' : 'w-[93px]')}>
        {lead}
        <label htmlFor={id} className={clsx('ml-auto', dim && 'text-[#6b6b6b]')}>{label}</label>
      </div>
      {children}
    </div>
  );
}

function Vector({ id, name, values }: { id: string; name: string; values: string[] }) {
  return (
    <div className="grid flex-1 grid-cols-4 gap-[2px]">
      {values.map((v, i) => (
        <input
          key={i}
          id={i === 0 ? id : undefined}
          aria-label={i === 0 ? undefined : `${name} ${i + 1}`}
          defaultValue={v}
          className={clsx(field, MONO, v !== '0' && 'font-bold')}
        />
      ))}
    </div>
  );
}

function ParameterPane() {
  return (
    <div className="flex h-[299px] shrink-0 flex-col bg-[#3a3a3a]">
      <PaneTabs
        tabs={[
          { label: 'Initialize_Attributes', className: 'w-[76px] bg-[#728c6f] pl-[3px] italic text-[#b9cbb5]' },
          { label: 'Take List', className: 'w-[49px] bg-[#262626] pl-[5px] text-[#cfcfcf]' },
          { label: 'Performance Monitor', className: 'w-[83px] bg-[#262626] pl-[5px] text-[#cfcfcf]' },
        ]}
      />
      <PathBar>
        <Icon name="pushpin" size="size-[10px]" className="ml-2 text-[#c5c5c5]" />
        <Icon name="target" className="ml-[5px]" />
      </PathBar>
      <div className="flex h-5 shrink-0 items-center border-t border-b border-t-[#555] border-b-[#222] bg-[#333] pr-1 pl-1">
        <Icon name="node" />
        <label htmlFor="node-name" className="mx-[3px] text-[7px] font-bold whitespace-nowrap text-[#e3e3e3]">Attribute Create</label>
        <input id="node-name" defaultValue="Initialize_Attributes" className={clsx('h-[15px] min-w-0 flex-1 bg-[#151515] px-0.5 text-[8px] text-[#e0e0e0]', MONO)} />
        <div className="ml-[3px] flex gap-[4px]">
          {['gear', 'hlogo', 'search', 'info', 'help'].map((n) => (
            <button key={n} aria-label={n}><Icon name={n} /></button>
          ))}
        </div>
      </div>
      <div className="flex flex-col pt-px pr-[5px] text-[7px] whitespace-nowrap text-[#bdbdbd]">
        <Row label="Group" id="group">
          <input id="group" className={clsx(field, 'flex-1')} />
          <button aria-label="Group menu" className="mr-[6px] ml-[2px] flex h-3 w-3 items-center justify-center border border-[#222] bg-[#444]">
            <Down color="text-[#999]" />
          </button>
          <Icon name="arrow" size="size-[11px]" />
        </Row>
        <Row label="Group Type" id="group-type">
          <Select id="group-type" value="Guess from Group" className="w-[92px]" />
        </Row>
        <Row label="Number of Attributes" id="count">
          <input id="count" defaultValue="1" className={clsx(field, MONO, 'ml-px w-[74px]')} />
          <button aria-label="Add" className="h-3 w-3 border border-[#222] bg-[#484848] text-[9px] leading-[9px] font-bold">+</button>
          <button aria-label="Remove" className="h-3 w-3 border border-[#222] bg-[#484848] text-[9px] leading-[9px] font-bold">−</button>
          <button className="h-[14px] w-10 border border-[#222] bg-linear-to-b from-[#505050] to-[#404040]">Clear</button>
        </Row>
        <div className="h-[3px]" />
        <Row
          label="Name"
          id="name"
          wide
          lead={
            <>
              <button aria-label="Remove attribute" className="ml-[5px] h-[13px] w-[13px] border border-[#222] bg-[#4a4a4a] text-[9px] leading-[10px] font-bold text-[#eee]">×</button>
              <button aria-label="Insert attribute" className="mr-[7px] flex h-[13px] w-[13px] items-center justify-center border border-[#222] bg-[#4a4a4a]"><Plus /></button>
              <Check id="enable" label="Enable attribute" checked />
            </>
          }
        >
          <input id="name" defaultValue="weight" className={clsx(field, MONO, 'flex-1 font-bold')} />
        </Row>
        <Row label="Existing Name" id="existing" wide>
          <Select id="existing" value="Use the better type, size and precision" className="w-[178px]" />
        </Row>
        <Row label="Local Variable" id="local" wide dim lead={<span className="ml-[38px]"><Check id="local-on" label="Use local variable" /></span>}>
          <input id="local" disabled className="h-[14px] min-w-0 flex-1 bg-[#313131]" />
        </Row>
        <Row label="Class" id="class" wide>
          <Select id="class" value="Point" className="w-[62px]" />
          <input id="infoblock" type="checkbox" disabled className="mr-[5px] ml-[8px] size-2 appearance-none bg-[#353535]" />
          <label htmlFor="infoblock" className="text-[#6b6b6b]">Save to Info Block</label>
        </Row>
        <Row label="Type" id="type" wide>
          <Select id="type" value="Float" className="w-[76px]" />
          <div className="w-px" />
          <label htmlFor="type-info" className="sr-only">Type qualifier</label>
          <Select id="type-info" value="Quaternion" className="w-[96px] font-bold text-[#e6e6e6]" />
        </Row>
        <Row label="Precision" id="precision" wide>
          <Select id="precision" value="32-bit" className="w-[52px]" />
        </Row>
        <Row label="Size" id="size" wide>
          <input id="size" defaultValue="3" className={clsx(field, MONO, 'w-[50px] font-bold')} />
          <div className="relative ml-[3px] flex min-w-0 flex-1">
            <input
              type="range"
              aria-label="Size slider"
              min="0"
              max="100"
              defaultValue="67"
              className="h-[14px] w-full min-w-0 appearance-none bg-[linear-gradient(90deg,#1c5cb0_67%,#777_67%)] bg-[length:100%_2px] bg-center bg-no-repeat [&::-webkit-slider-thumb]:h-[13px] [&::-webkit-slider-thumb]:w-[5px] [&::-webkit-slider-thumb]:appearance-none [&::-webkit-slider-thumb]:border [&::-webkit-slider-thumb]:border-[#888] [&::-webkit-slider-thumb]:bg-[#444]"
            />
            {/* mouse pointer */}
            <svg viewBox="0 0 10 15" className="pointer-events-none absolute top-0 left-[80%] h-[14px] w-[9px]" aria-hidden="true">
              <path d="M1 1v11l2.500-2.500L5.500 14l2-1-2-4H9z" fill="#fff" stroke="#222" strokeWidth="0.500" />
            </svg>
          </div>
        </Row>
        <Row label="Default" id="default" wide>
          <Vector id="default" name="Default" values={['0', '0', '0', '0']} />
        </Row>
        <div className="flex h-[14px] items-center pl-[38px]">
          <Check id="write" checked />
          <label htmlFor="write" className="mr-[17px] ml-[5px]">Write Values</label>
          <Check id="allow" checked />
          <label htmlFor="allow" className="ml-[5px]">Allow Local Vars</label>
        </div>
        <Row label="Value" id="value" wide>
          <Vector id="value" name="Value" values={['0.1', '0.4', '0.3', '0']} />
        </Row>
      </div>
    </div>
  );
}

/* ---------- network editor ---------- */

function NetworkPane() {
  return (
    <div className="flex min-h-0 flex-1 flex-col">
      <PaneTabs
        tabs={[
          { label: '/obj/Attribute_Create_SOP', className: 'w-[95px] bg-[#728c6f] pl-[3px] italic text-[#b9cbb5]' },
          { label: 'Tree View', className: 'w-[52px] bg-[#262626] pl-[5px] text-[#cfcfcf]' },
          { label: 'Material Palette', className: 'w-[68px] bg-[#262626] pl-1 text-[#cfcfcf]' },
          { label: 'Asset Browser', className: 'w-[62px] bg-[#262626] pl-[3px] text-[#cfcfcf]' },
        ]}
      />
      <PathBar>
        <span className="ml-1 flex h-4 w-4 items-center justify-center bg-[#8d948b]"><Icon name="pushpin" size="size-[10px]" className="text-[#eee]" /></span>
        <Icon name="target" className="ml-[3px]" />
      </PathBar>
      <div className="flex h-[18px] shrink-0 items-center border-y border-[#161616] bg-[#2c2c2c] text-[8px] text-[#cfcfcf]">
        <span className="mr-4 h-full w-[7px] border-r border-black bg-[#444]" />
        <nav className="flex flex-1 justify-between pr-2">
          {['Add', 'Edit', 'Go', 'View', 'Tools', 'Layout', 'Help'].map((item) => <button key={item}>{item}</button>)}
        </nav>
        <div className="flex items-center gap-[5px]">
          {['tools', 'tree', 'list', 'palette', 'table', 'map', 'note'].map((n) => (
            <button key={n} aria-label={n}><Icon name={n} size="size-[11px]" /></button>
          ))}
        </div>
        <Down color="text-[#888]" className="ml-1 -rotate-90" />
      </div>
      <div className="relative flex-1 overflow-hidden bg-[#2e2e2e]">
        <svg viewBox="954 413 326 245" preserveAspectRatio="xMinYMin slice" className="absolute inset-0 size-full" aria-hidden="true">
          <path d="M1041 463c2-14 10-21 24-22l215-6" fill="none" stroke="#42639a" />
          <g stroke="#a3bbd8" strokeWidth="19" strokeLinecap="round">
            <path d="M1021 480.500l39 22.500M1060 480.500l-39 22.500" />
          </g>
          <path d="M1021 490l10-11M1051 479l10 10M1021 494l10 10M1051 504l10-10" stroke="#6b819d" />
          <circle cx="1041" cy="491" r="8" fill="#a3bbd8" stroke="#e6ebf0" strokeWidth="2" />
          <circle cx="1041" cy="491" r="9" fill="none" stroke="#333" strokeWidth="1" strokeDasharray="1 1.500" />
          <circle cx="1041" cy="570" r="43" fill="#4363a1" />
          <circle cx="1041" cy="570" r="29.500" fill="#957bd0" />
          <path d="M1041 518v33" stroke="#4a6fae" />
          <g fill="#bdbdbd">
            <circle cx="1041" cy="465.500" r="4" />
            <circle cx="1041" cy="518.500" r="4" />
            <circle cx="1041" cy="551" r="4" />
            <circle cx="1041" cy="589" r="4" />
          </g>
          <path d="M1008 557h72q5 0 4 4l-5 18q-1 4-5 4h-72q-5 0-4-4l5-18q1-4 5-4z" fill="#fb4a3f" stroke="#2a1512" strokeWidth="4" />
          <path d="M1075 557h5q5 0 4 4l-5 18q-1 4-5 4h-6z" fill="#1297f5" />
          <path d="M1016 557l-8 26M1026 557l-8 26M1074 557l-7 26" stroke="#7d1f1a" />
          <path d="M1008 557h72q5 0 4 4l-5 18q-1 4-5 4h-72q-5 0-4-4l5-18q1-4 5-4z" fill="none" stroke="#f0b5ae" strokeWidth="1.200" />
          <path d="M1037 561h12v8h-6l-2 2-1-2h-3z" fill="#e8e8e8" stroke="#333" />
          <path d="M1043 562v6M1040 565h6" stroke="#222" strokeWidth="1.500" />
          <path d="M1040 571l-5 4" stroke="#e8e8e8" strokeWidth="2" />
          <circle cx="1035" cy="575" r="3" fill="#ccc" stroke="#333" />
          <circle cx="1101" cy="588" r="6.500" fill="#d9a514" />
          <path d="M1101 584v5M1101 590.500v1.500" stroke="#2a2005" strokeWidth="2" />
        </svg>
        <p className="absolute top-[9px] right-[7px] text-[14px] leading-5 font-bold text-[#515151]">Geometry</p>
        <div className="absolute top-[50px] left-[123px] whitespace-nowrap">
          <p className="text-[14px] leading-[19px] text-[#5e5e5e]">Null</p>
          <p className="text-[16px] leading-[19px] text-[#dadada]">Input_Geometry</p>
        </div>
        <div className="absolute top-[129px] left-[138px] whitespace-nowrap">
          <p className="text-[14px] leading-[19px] text-[#5e5e5e]">Attribute Create</p>
          <p className="text-[16px] leading-[19px] text-[#dadada]">Initialize_Attributes</p>
          <p className="mt-[18px] text-[14px] leading-[18px] text-[#7fa8e3]">weight</p>
        </div>
      </div>
    </div>
  );
}

/* ---------- playbar ---------- */

const transport = [
  ['First frame', 'M1 3v10M8 3v10L3 8zM15 3v10l-5-5z'],
  ['Previous key', 'M13 3v10L6 8z'],
  ['Previous frame', 'M9 3v10L3 8zM12 3v10'],
  ['Play reverse', 'M12 3v10L4 8z'],
  ['Stop', 'M3 3h10v10H3z'],
  ['Play', 'M4 3v10l8-5z'],
  ['Next frame', 'M4 3v10M7 3v10l6-5z'],
  ['Next key', 'M3 3v10l7-5z'],
  ['Last frame', 'M1 3v10l5-5zM8 3v10l5-5zM15 3v10'],
];

function Playbar() {
  const ticks = Array.from({ length: 40 }, (_, i) => (i + 1) * 6);
  return (
    <div className="flex h-[30px] shrink-0 items-stretch border-t border-[#4a4a4a] bg-[#2e2e2e] pl-[9px]">
      <div className="flex items-center pb-0.5">
        {transport.map(([label, d]) => (
          <button
            key={label}
            aria-label={label}
            className={clsx('flex h-[19px] w-[18px] items-center justify-center border border-[#1d1d1d]', label === 'Stop' ? 'bg-[#c4861b]' : 'bg-[#3f3f3f]')}
          >
            <svg viewBox="0 0 16 16" className="size-[12px]">
              <path d={d} fill="#e6e6e6" stroke="#e6e6e6" />
              {label === 'Previous key' && <path d="M4 3v10" stroke="#7fb53c" strokeWidth="2" />}
              {label === 'Next key' && <path d="M12 3v10" stroke="#7fb53c" strokeWidth="2" />}
            </svg>
          </button>
        ))}
      </div>
      <input aria-label="Frame" defaultValue="1" className={clsx('my-[5px] ml-[3px] h-[19px] w-[32px] bg-[#141414] px-0.5 text-[8px] text-[#e4e4e4]', MONO)} />
      <div className={clsx('ml-[2px] flex w-[27px] flex-col pt-1 text-[8px] text-[#ddd]', MONO)}>
        <input aria-label="Range start" defaultValue="1" className="h-[9px] w-full bg-[#141414] px-0.5" />
        <input aria-label="Global start" defaultValue="1" className="mt-0.5 h-[9px] w-full px-0.5" />
      </div>
      <div className="relative ml-[2px] flex min-w-0 flex-1 flex-col">
        <svg className="h-[23px] w-full" aria-hidden="true">
          <line x1="0" x2="100%" y1="10.500" y2="10.500" stroke="#a8a8a8" />
          {ticks.map((f) => {
            const x = `${((f - 1) / 240) * 100}%`;
            const major = f % 24 === 0;
            return (
              <g key={f}>
                <line x1={x} x2={x} y1={major ? 7 : 8} y2={major ? 14 : 13} stroke={major ? '#d5d5d5' : '#8f8f8f'} />
                {major && <text x={x} y="7" fontSize="7" fill="#bdbdbd">{f === 240 ? '2' : f}</text>}
              </g>
            );
          })}
        </svg>
        <span className="absolute top-0 left-0 w-[14px] border border-[#ddd] bg-[#1c1c1c] text-center text-[8px] leading-[10px] text-white">1</span>
        <div className="flex h-1 items-center justify-center bg-[#444]"><span className="h-px w-2 bg-[#111]" /></div>
      </div>
      <div className={clsx('flex w-[30px] flex-col pt-1 text-[8px] text-[#ddd]', MONO)}>
        <input aria-label="Range end" defaultValue="240" className="h-[9px] w-full bg-[#141414] px-0.5" />
        <input aria-label="Global end" defaultValue="240" className="mt-0.5 h-[9px] w-full px-0.5" />
      </div>
      <div className="ml-[2px] flex items-center gap-px pb-0.5">
        <ToolButton name="key" active className="mr-[3px] h-[19px] w-[17px]" />
        {['realtime', 'loop', 'audio', 'playopt'].map((n) => <ToolButton key={n} name={n} className="h-[15px] w-[14px] bg-[#3f3f3f]" />)}
      </div>
    </div>
  );
}

export default function App() {
  return (
    <div className="flex min-h-screen flex-col overflow-hidden bg-[#262626] font-['Noto_Sans_CJK_SC',sans-serif] text-[#cfcfcf]">
      <header className="flex h-[18px] shrink-0 items-center border-t border-[#4c4c4c] bg-[#373737] pl-[10px] text-[8px] leading-4">
        <nav className="flex gap-[6px]">
          {['File', 'Edit', 'Render', 'Assets', 'Windows', 'Help'].map((item) => <button key={item}>{item}</button>)}
        </nav>
        <button className="ml-[19px] flex h-[14px] w-[69px] items-center gap-[2px] bg-[#444] pl-[3px]">
          <Icon name="layout" size="size-[10px]" />
          node_vids
        </button>
        <span className="mx-[5px]"><UpDown /></span>
        <button className="ml-1 flex h-[14px] w-[68px] items-center gap-[3px] bg-[#444] pl-[3px]">
          <Icon name="radial" size="size-[10px]" />
          Main
        </button>
        <span className="mx-[6px]"><UpDown /></span>
        <button className="ml-auto flex h-[14px] w-[97px] items-center gap-[3px] bg-[#424242] pl-[3px]">
          <Icon name="clapper" size="size-[10px]" />
          Main
        </button>
        <span className="mx-[6px]"><UpDown /></span>
        <Icon name="help" className="mr-[5px] ml-2" />
      </header>

      <div className="flex shrink-0 border-t border-black pl-[6px]">
        <Shelf tabs={leftTabs} tools={leftTools} className="w-[588px]" />
        <div className="flex w-[6px] items-center justify-center bg-[#2b2b2b]"><span className="h-[10px] w-[3px] bg-[#161616]" /></div>
        <Shelf tabs={rightTabs} tools={rightTools} className="flex-1" />
      </div>

      <main className="flex min-h-0 flex-1">
        <div className="w-[5px] shrink-0 border-r border-black bg-[#383838]" />
        <ScenePane />
        <div className="w-[3px] shrink-0 border-x border-black bg-[#4a4a4a]" />
        <div className="flex w-[326px] shrink-0 flex-col">
          <ParameterPane />
          <div className="flex h-[5px] shrink-0 items-center justify-center border-y border-[#222] bg-[#444]"><Grip /></div>
          <NetworkPane />
        </div>
      </main>

      <Playbar />

      <footer className="flex h-[17px] shrink-0 flex-col border-t border-black bg-[#1c1c1c] text-[7px] leading-[15px]">
        <div className="flex h-[15px] items-center pl-0.5">
          <span>Hold down Ctrl to snap to rounded values</span>
          <div className="ml-auto flex h-full items-center bg-[#2e2e2e]">
            <Icon name="brain" className="mx-[3px]" />
            <button className="h-[15px] w-[66px] bg-[#3e3e3e]">/obj/Attribute_…</button>
            <span className="mx-[5px]"><UpDown /></span>
            <Icon name="refresh" size="size-[10px]" className="mr-[5px] ml-1" />
            <button className="h-[15px] w-[62px] bg-[#3e3e3e]">Auto Update</button>
            <span className="mx-[5px]"><UpDown /></span>
          </div>
        </div>
        <div className="ml-8 h-px w-[230px] bg-[#f3e9ee]" />
      </footer>
    </div>
  );
}
